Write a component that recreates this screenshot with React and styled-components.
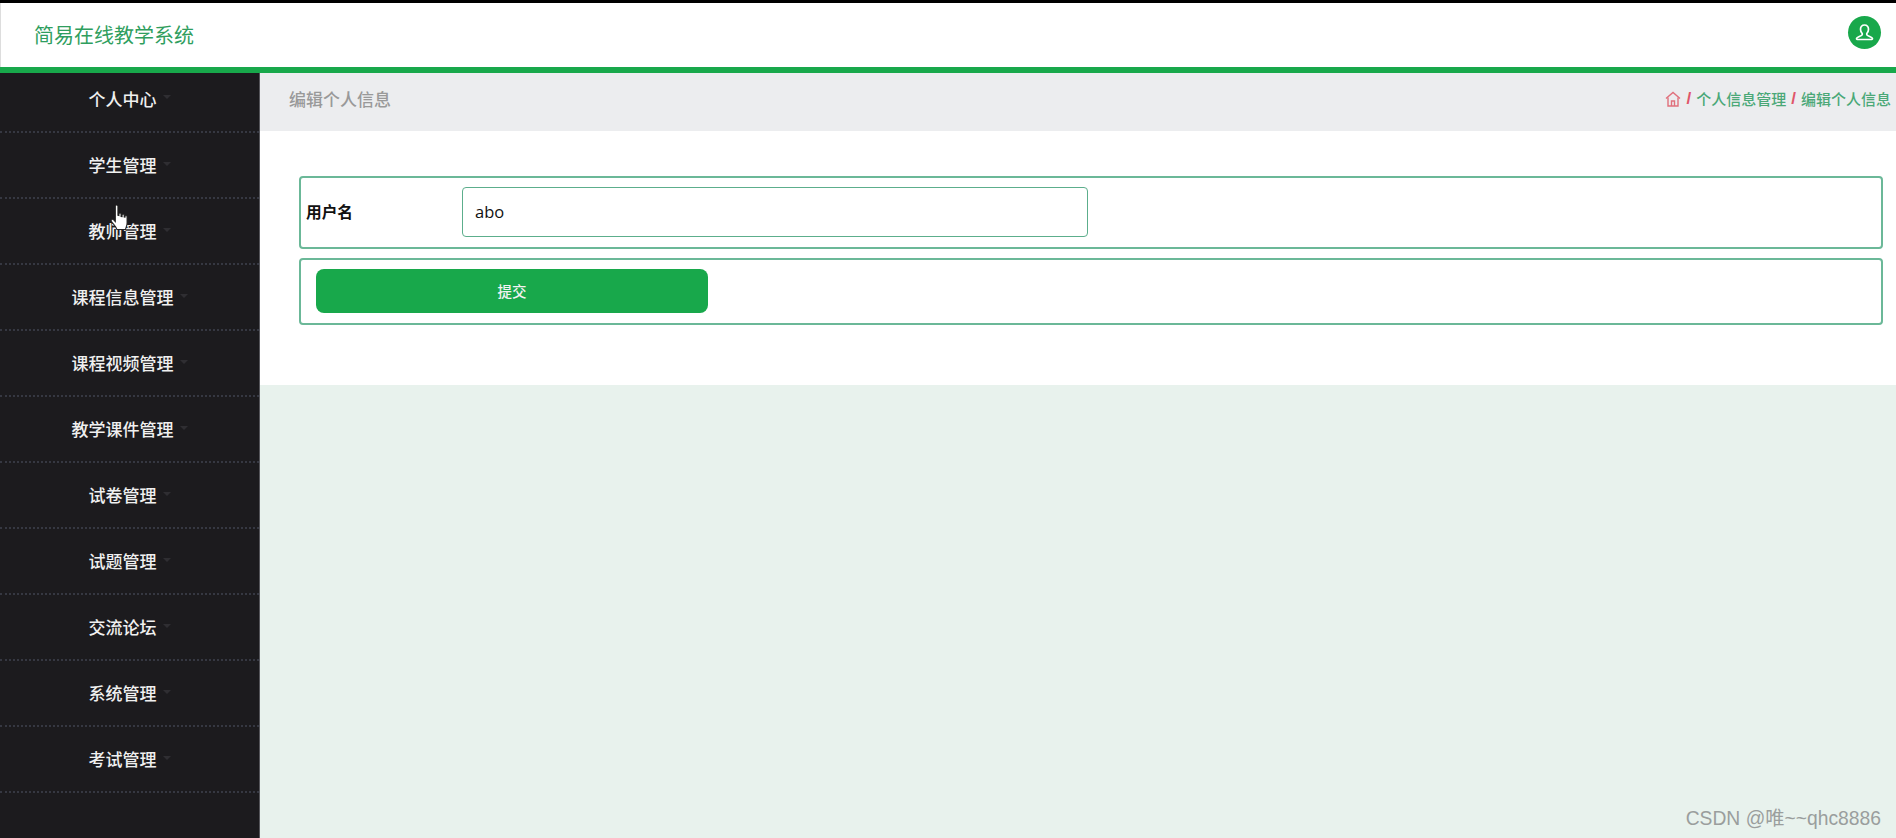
import React from 'react';
import styled, { createGlobalStyle } from 'styled-components';

const cjk = '"Noto Sans CJK SC", "Liberation Sans", sans-serif';

const GlobalStyle = createGlobalStyle`
  html, body {
    margin: 0;
    padding: 0;
    height: 100%;
    overflow: hidden;
    background: #e8f2ed;
    font-family: ${cjk};
  }
  * {
    box-sizing: border-box;
  }
`;

const Page = styled.div`
  position: relative;
  width: 1896px;
  height: 838px;
  display: flex;
  flex-direction: column;
  border-top: 3px solid #000;
  overflow: hidden;
`;

const TopBar = styled.header`
  height: 70px;
  flex-shrink: 0;
  display: flex;
  align-items: center;
  justify-content: space-between;
  padding: 0 15px 6px 34px;
  background: #fff;
  border-bottom: 6px solid #18a84b;
  box-shadow: inset 1px 0 0 #ddd;
`;

const Logo = styled.div`
  font-size: 20px;
  line-height: 1;
  color: #2f9e5e;
  padding-top: 5px;
`;

const Avatar = styled.div`
  width: 33px;
  height: 33px;
  border-radius: 50%;
  background: #18a84b;
  display: flex;
  align-items: center;
  justify-content: center;
`;

const Body = styled.div`
  flex: 1;
  display: flex;
  min-height: 0;
`;

const Sidebar = styled.nav`
  width: 260px;
  flex-shrink: 0;
  background: #1c1b1e;
  border-right: 1px solid #55555a;
`;

const MenuItem = styled.div`
  height: ${p => (p.first ? '60px' : '66px')};
  display: flex;
  align-items: center;
  justify-content: center;
  border-bottom: 2px dotted #363842;
  color: #f0f0f0;
  font-size: 17px;
  font-weight: 500;
  padding-bottom: ${p => (p.first ? '8px' : '1px')};
  &::after {
    content: '';
    width: 0;
    height: 0;
    margin-left: 6px;
    margin-top: -2px;
    border-left: 4.5px solid transparent;
    border-right: 4.5px solid transparent;
    border-top: 4px solid #2f2e32;
  }
`;

const Main = styled.main`
  flex: 1;
  min-width: 0;
  display: flex;
  flex-direction: column;
  background: #e8f2ed;
`;

const SubHeader = styled.div`
  height: 58px;
  display: flex;
  align-items: center;
  justify-content: space-between;
  padding: 0 5px 7px 29px;
  background: #ecedef;
`;

const SubTitle = styled.div`
  font-size: 17px;
  font-weight: 500;
  color: #999;
`;

const Crumbs = styled.div`
  display: flex;
  align-items: center;
  gap: 5px;
  font-size: 15px;
  font-weight: 500;
  color: #4aa877;
`;

const Slash = styled.span`
  color: #e0566a;
  font-size: 17px;
  font-weight: 700;
  font-family: "Liberation Sans", sans-serif;
`;

const Panel = styled.section`
  height: 254px;
  background: #fff;
  padding: 45px 13px 0 39px;
  display: flex;
  flex-direction: column;
  gap: 9px;
`;

const FormRow = styled.div`
  display: flex;
  align-items: center;
  height: ${p => p.h}px;
  border: 2px solid #6bb898;
  border-radius: 4px;
  padding: 0 0 2px ${p => p.pad || 0}px;
`;

const Label = styled.label`
  width: 161px;
  padding-left: 5px;
  font-size: 15.7px;
  font-weight: 700;
  color: #111;
`;

const TextInput = styled.input`
  width: 626px;
  height: 50px;
  padding: 0 12px;
  border: 1.5px solid #5cae8c;
  border-radius: 4px;
  outline: none;
  font-family: "Open Sans", "Liberation Sans", sans-serif;
  font-size: 16.5px;
  color: #111;
  background: #fff;
`;

const SubmitBtn = styled.button`
  width: 392px;
  height: 44px;
  border: none;
  border-radius: 8px;
  background: #18a84b;
  color: #f2f2f2;
  font-family: ${cjk};
  font-size: 14.5px;
  font-weight: 500;
  padding: 0;
`;

const Watermark = styled.div`
  position: absolute;
  right: 15px;
  bottom: 7px;
  font-family: "Liberation Sans", "Noto Sans CJK SC", sans-serif;
  font-size: 19.3px;
  color: #9a9e9d;
`;

const Cursor = styled.svg`
  position: absolute;
  left: 110px;
  top: 201px;
`;

const menu = [
  '个人中心',
  '学生管理',
  '教师管理',
  '课程信息管理',
  '课程视频管理',
  '教学课件管理',
  '试卷管理',
  '试题管理',
  '交流论坛',
  '系统管理',
  '考试管理'
];

const UserIcon = () => (
  <svg width="19" height="19" viewBox="0 0 19 19" fill="none" stroke="#fff" strokeWidth="1.7">
    <path d="M9.500 2c-2.600 0-4 1.800-4 4.200 0 1.900.8 3.400 1.700 4.300v1.300c-.3 1-4.400 2.200-5.400 3.200-.6.6-.2 1.500.6 1.500h14.200c.8 0 1.200-.9.6-1.500-1-1-5.100-2.200-5.400-3.200v-1.300c.9-.9 1.700-2.400 1.700-4.300 0-2.400-1.400-4.200-4-4.200z" />
  </svg>
);

const HomeIcon = () => (
  <svg width="16" height="16" viewBox="0 0 16 16" fill="none" stroke="#e0707c" strokeWidth="1.4" style={{ marginRight: 1 }}>
    <path d="M1 7.500 8 1.500l7 6" />
    <path d="M3 6.500V15h10V6.500" />
    <path d="M6.500 15v-5h3v5" />
  </svg>
);

const HandCursor = () => (
  <Cursor width="20" height="27" viewBox="0 0 19 26">
    <path
      d="M5 2c0-1.500 2.500-1.500 2.500 0v9l1 .2V9.500c0-1.200 2-1.200 2 0V12l1 .2v-1.700c0-1.200 2-1.200 2 0v2l.8.2V12c0-1.100 2-1.100 2 0v6c0 3-1 4-1.500 6.500H6.500C5.500 21 2.500 19 1.200 16.500c-.8-1.500.8-2.500 2-1.500L5 17z"
      fill="#fff"
      stroke="#222"
      strokeWidth="1"
    />
  </Cursor>
);

export default function App() {
  return (
    <>
      <GlobalStyle />
      <Page>
        <TopBar>
          <Logo>简易在线教学系统</Logo>
          <Avatar>
            <UserIcon />
          </Avatar>
        </TopBar>
        <Body>
          <Sidebar>
            {menu.map((name, i) => (
              <MenuItem key={name} first={i === 0}>
                {name}
              </MenuItem>
            ))}
          </Sidebar>
          <Main>
            <SubHeader>
              <SubTitle>编辑个人信息</SubTitle>
              <Crumbs>
                <HomeIcon />
                <Slash>/</Slash>
                <span>个人信息管理</span>
                <Slash>/</Slash>
                <span>编辑个人信息</span>
              </Crumbs>
            </SubHeader>
            <Panel>
              <FormRow h={73}>
                <Label>用户名</Label>
                <TextInput defaultValue="abo" />
              </FormRow>
              <FormRow h={67} pad={15}>
                <SubmitBtn>提交</SubmitBtn>
              </FormRow>
            </Panel>
          </Main>
        </Body>
        <HandCursor />
        <Watermark>CSDN @唯~~qhc8886</Watermark>
      </Page>
    </>
  );
}
